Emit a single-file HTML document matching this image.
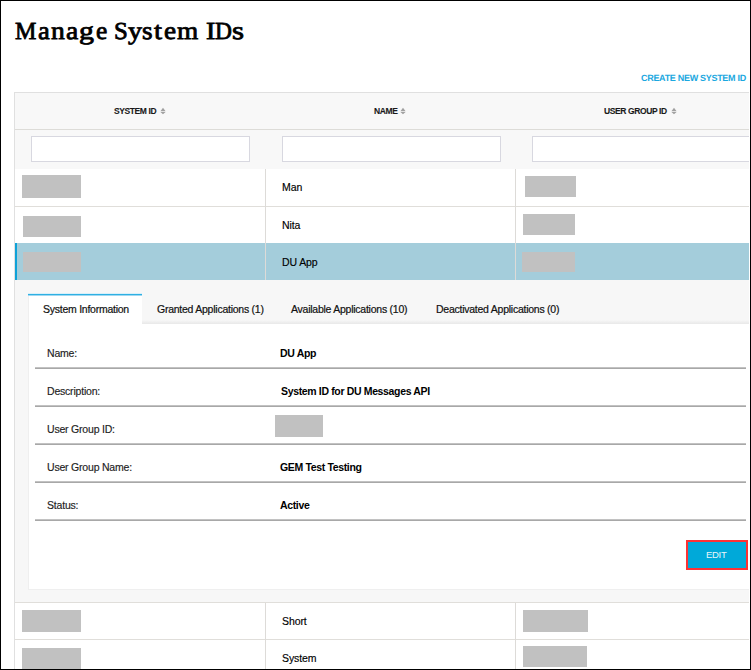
<!DOCTYPE html>
<html>
<head>
<meta charset="utf-8">
<style>
html,body{margin:0;padding:0;}
body{width:751px;height:670px;overflow:hidden;position:relative;background:#fff;font-family:"Liberation Sans",sans-serif;color:#222;}
.a{position:absolute;}
.t{position:absolute;white-space:nowrap;line-height:12px;}
#clip{position:absolute;left:0;top:0;width:749px;height:669px;overflow:hidden;}
#frame{position:absolute;left:0;top:0;width:751px;height:670px;box-sizing:border-box;border:1px solid #000;z-index:50;}
.titleL{font-family:"Liberation Serif",serif;font-weight:400;color:#000;line-height:30px;text-rendering:geometricPrecision;-webkit-text-stroke:0.8px #000;}
.hdr{font-size:8.5px;font-weight:700;letter-spacing:-0.4px;color:#1a1a1a;-webkit-text-stroke:0.1px #1a1a1a;}
.sort{position:absolute;width:6px;height:8px;}
.inp{position:absolute;top:136px;height:26px;box-sizing:border-box;border:1px solid #d8d8e0;background:#fff;}
.cell{font-size:10.5px;letter-spacing:-0.1px;color:#000;-webkit-text-stroke:0.15px #000;}
.gb{position:absolute;background:#c1c1c1;}
.hl{position:absolute;height:1px;background:#e0deda;}
.vl{position:absolute;width:1px;background:#dddbd8;}
.tab{font-size:10.5px;letter-spacing:-0.25px;color:#111;-webkit-text-stroke:0.2px #111;}
.lbl{font-size:10.5px;letter-spacing:-0.2px;color:#222;-webkit-text-stroke:0.15px #222;}
.val{font-size:10.5px;font-weight:700;letter-spacing:-0.35px;color:#000;}
.dl{position:absolute;left:35px;width:711px;height:1px;border-top:1px solid #c2c2c2;background:#a8a8a8;}
</style>
</head>
<body>
<div id="clip">
  <!-- title -->
  <div class="t titleL" style="left:15.03px;top:17px;"><span style="display:inline-block;width:22.57px;font-size:24.5px;transform:scaleX(0.98);transform-origin:0 0;">M</span><span style="display:inline-block;width:13.14px;font-size:25.0px;transform:scaleX(1.06);transform-origin:0 0;">a</span><span style="display:inline-block;width:15.66px;font-size:25.0px;transform:scaleX(1.104);transform-origin:0 0;">n</span><span style="display:inline-block;width:12.77px;font-size:25.0px;transform:scaleX(1.104);transform-origin:0 0;">a</span><span style="display:inline-block;width:17.13px;font-size:25.0px;transform:scaleX(1.194);transform-origin:0 0;">g</span><span style="display:inline-block;width:17.72px;font-size:25.0px;transform:scaleX(1.015);transform-origin:0 0;">e</span><span style="display:inline-block;width:13.72px;font-size:24.5px;transform:scaleX(1.013);transform-origin:0 0;">S</span><span style="display:inline-block;width:14.79px;font-size:25.0px;transform:scaleX(1.123);transform-origin:0 0;">y</span><span style="display:inline-block;width:11.60px;font-size:25.0px;transform:scaleX(1.087);transform-origin:0 0;">s</span><span style="display:inline-block;width:9.47px;font-size:25.0px;transform:scaleX(1.157);transform-origin:0 0;">t</span><span style="display:inline-block;width:13.66px;font-size:25.0px;transform:scaleX(1.088);transform-origin:0 0;">e</span><span style="display:inline-block;width:29.24px;font-size:25.0px;transform:scaleX(1.091);transform-origin:0 0;">m</span><span style="display:inline-block;width:9.03px;font-size:24.5px;transform:scaleX(1.142);transform-origin:0 0;">I</span><span style="display:inline-block;width:16.81px;font-size:24.5px;transform:scaleX(0.955);transform-origin:0 0;">D</span><span style="display:inline-block;width:20.00px;font-size:25.0px;transform:scaleX(1.236);transform-origin:0 0;">s</span></div>
  <!-- create link -->
  <div class="t" style="left:641px;top:72px;font-size:9px;font-weight:700;letter-spacing:-0.3px;color:#1ba8e0;text-rendering:geometricPrecision;">CREATE NEW SYSTEM ID</div>

  <!-- table frame -->
  <div class="a" style="left:14px;top:92px;width:800px;height:600px;border-left:1px solid #e0e0e0;border-top:1px solid #e0e0e0;"></div>
  <!-- header bg -->
  <div class="a" style="left:15px;top:93px;width:800px;height:36px;background:#f8f8f8;"></div>
  <div class="hl" style="left:15px;top:129px;width:800px;background:#dddcd8;"></div>
  <!-- filter bg -->
  <div class="a" style="left:15px;top:130px;width:800px;height:39px;background:#f8f8f8;"></div>

  <div class="t hdr" style="left:114px;top:105px;">SYSTEM ID</div>
  <div class="t hdr" style="left:374px;top:105px;">NAME</div>
  <div class="t hdr" style="left:604px;top:105px;">USER GROUP ID</div>

  <svg class="sort" style="left:160px;top:107px;" viewBox="0 0 6 8"><path d="M3 0.7L5.6 4.2H0.4Z M0.4 4.9H5.6L3 7.2Z" fill="#a0a0a0"/></svg>
  <svg class="sort" style="left:400px;top:107px;" viewBox="0 0 6 8"><path d="M3 0.7L5.6 4.2H0.4Z M0.4 4.9H5.6L3 7.2Z" fill="#a0a0a0"/></svg>
  <svg class="sort" style="left:671px;top:107px;" viewBox="0 0 6 8"><path d="M3 0.7L5.6 4.2H0.4Z M0.4 4.9H5.6L3 7.2Z" fill="#a0a0a0"/></svg>

  <div class="inp" style="left:31px;width:219px;"></div>
  <div class="inp" style="left:282px;width:219px;"></div>
  <div class="inp" style="left:532px;width:219px;"></div>

  <!-- body rows -->
  <div class="hl" style="left:15px;top:206px;width:800px;"></div>
  <!-- selected row -->
  <div class="a" style="left:15px;top:243px;width:800px;height:37px;background:#a4cddb;"></div>
  <div class="a" style="left:15px;top:243px;width:2px;height:37px;background:#0fa2d8;"></div>
  <!-- expanded area -->
  <div class="a" style="left:15px;top:280px;width:800px;height:322px;background:#f7f7f7;"></div>
  <div class="hl" style="left:15px;top:602px;width:800px;"></div>
  <div class="hl" style="left:15px;top:639px;width:800px;"></div>
  <!-- column dividers -->
  <div class="vl" style="left:265px;top:169px;height:111px;"></div>
  <div class="vl" style="left:515px;top:169px;height:111px;"></div>
  <div class="vl" style="left:265px;top:603px;height:80px;"></div>
  <div class="vl" style="left:515px;top:603px;height:80px;"></div>

  <!-- gray placeholders col1 -->
  <div class="gb" style="left:22px;top:175px;width:59px;height:23px;"></div>
  <div class="gb" style="left:23px;top:216px;width:58px;height:21px;"></div>
  <div class="gb" style="left:23px;top:252px;width:58px;height:20px;"></div>
  <div class="gb" style="left:22px;top:610px;width:59px;height:22px;"></div>
  <div class="gb" style="left:22px;top:648px;width:59px;height:22px;"></div>
  <!-- gray placeholders col3 -->
  <div class="gb" style="left:525px;top:176px;width:51px;height:21px;"></div>
  <div class="gb" style="left:523px;top:214px;width:52px;height:21px;"></div>
  <div class="gb" style="left:522px;top:252px;width:53px;height:20px;"></div>
  <div class="gb" style="left:523px;top:610px;width:65px;height:22px;"></div>
  <div class="gb" style="left:523px;top:646px;width:64px;height:21px;"></div>

  <!-- tabs -->
  
  <div class="a" style="left:142px;top:320px;width:700px;height:4px;background:linear-gradient(#f7f7f7,#e8e8e8);"></div>
  <div class="a" style="left:28px;top:324px;width:721px;height:265px;background:#fff;border-left:1px solid #efefef;box-sizing:border-box;"></div>
  <div class="a" style="left:28px;top:296px;width:114px;height:28px;background:#fff;border-left:1px solid #efefef;box-sizing:border-box;"></div>
  <div class="a" style="left:28px;top:293px;width:114px;height:1px;background:#d9f0fa;"></div><div class="a" style="left:28px;top:294px;width:114px;height:1px;background:#2fb0e3;"></div><div class="a" style="left:28px;top:295px;width:114px;height:1px;background:#9fd8f1;"></div>
  <div class="a" style="left:28px;top:589px;width:721px;height:1px;background:#efefef;"></div>
  <div class="t tab" style="left:43px;top:303px;">System Information</div>
  <div class="t tab" style="left:157px;top:303px;">Granted Applications (1)</div>
  <div class="t tab" style="left:291px;top:303px;">Available Applications (10)</div>
  <div class="t tab" style="left:436px;top:303px;">Deactivated Applications (0)</div>

  <!-- details -->
  <div class="t lbl" style="left:47px;top:347px;">Name:</div>
  <div class="t val" style="left:280px;top:347px;">DU App</div>
  <div class="dl" style="top:367px;"></div>
  <div class="t lbl" style="left:47px;top:385px;">Description:</div>
  <div class="t val" style="left:281px;top:385px;">System ID for DU Messages API</div>
  <div class="dl" style="top:405px;"></div>
  <div class="t lbl" style="left:47px;top:423px;">User Group ID:</div>
  <div class="gb" style="left:275px;top:415px;width:48px;height:22px;"></div>
  <div class="dl" style="top:443px;"></div>
  <div class="t lbl" style="left:47px;top:461px;">User Group Name:</div>
  <div class="t val" style="left:280px;top:461px;">GEM Test Testing</div>
  <div class="dl" style="top:481px;"></div>
  <div class="t lbl" style="left:47px;top:499px;">Status:</div>
  <div class="t val" style="left:280px;top:499px;">Active</div>
  <div class="dl" style="top:519px;"></div>

  <!-- edit button -->
  <div class="a" style="left:686px;top:540px;width:62px;height:30px;box-sizing:border-box;border:2px solid #fd3234;background:#00a9d9;"></div>
  <div class="t" style="left:706px;top:549px;font-size:9.5px;letter-spacing:-0.3px;color:#eaf6fb;">EDIT</div>

  <!-- names -->
  <div class="t cell" style="left:282px;top:181px;">Man</div>
  <div class="t cell" style="left:282px;top:219px;">Nita</div>
  <div class="t cell" style="left:282px;top:256px;">DU App</div>
  <div class="t cell" style="left:282px;top:615px;">Short</div>
  <div class="t cell" style="left:282px;top:652px;">System</div>
</div>
<div id="frame"></div>
</body>
</html>
